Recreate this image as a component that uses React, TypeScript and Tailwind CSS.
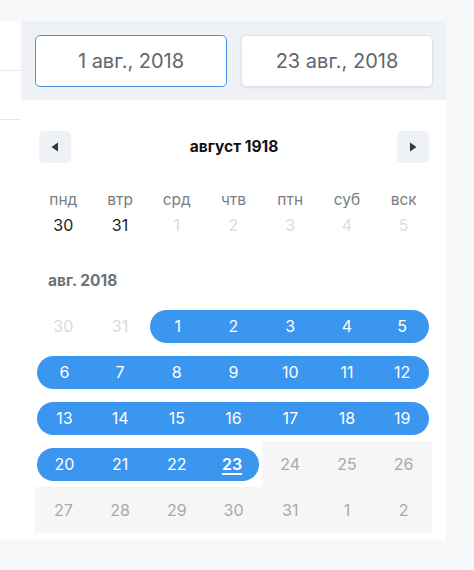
import React from 'react';

const weekDays = ['пнд', 'втр', 'срд', 'чтв', 'птн', 'суб', 'вск'];

type Day = { n: number; kind: 'faint' | 'sel' | 'muted' | 'plain' };

const rows: Day[][] = [
  [
    { n: 30, kind: 'faint' },
    { n: 31, kind: 'faint' },
    { n: 1, kind: 'sel' },
    { n: 2, kind: 'sel' },
    { n: 3, kind: 'sel' },
    { n: 4, kind: 'sel' },
    { n: 5, kind: 'sel' },
  ],
  [6, 7, 8, 9, 10, 11, 12].map((n) => ({ n, kind: 'sel' as const })),
  [13, 14, 15, 16, 17, 18, 19].map((n) => ({ n, kind: 'sel' as const })),
  [
    { n: 20, kind: 'sel' },
    { n: 21, kind: 'sel' },
    { n: 22, kind: 'sel' },
    { n: 23, kind: 'sel' },
    { n: 24, kind: 'muted' },
    { n: 25, kind: 'muted' },
    { n: 26, kind: 'muted' },
  ],
  [27, 28, 29, 30, 31, 1, 2].map((n) => ({ n, kind: 'muted' as const })),
];

const Arrow = ({ dir }: { dir: 'left' | 'right' }) => (
  <svg width="8" height="10" viewBox="0 0 8 10">
    {dir === 'left' ? (
      <path d="M7 0.5 L0.5 5 L7 9.5 Z" fill="#2d3748" />
    ) : (
      <path d="M1 0.5 L7.5 5 L1 9.5 Z" fill="#2d3748" />
    )}
  </svg>
);

const DayCell = ({ day, prev, next }: { day: Day; prev?: Day; next?: Day }) => {
  if (day.kind === 'sel') {
    const start = !prev || prev.kind !== 'sel';
    const end = !next || next.kind !== 'sel';
    return (
      <div className="h-[46px] flex items-center">
        <div
          className={`h-[33px] flex-1 bg-[#3b96ef] flex items-center justify-center text-white text-[16px] ${
            start ? 'rounded-l-full ml-[2px]' : ''
          } ${end ? 'rounded-r-full mr-[3px]' : ''}`}
        >
          {day.n === 23 ? (
            <span className="font-semibold border-b-2 border-white leading-[18px] pt-[2px]">23</span>
          ) : (
            day.n
          )}
        </div>
      </div>
    );
  }
  return (
    <div
      className={`h-[46px] flex items-center justify-center text-[16px] ${
        day.kind === 'muted' ? 'bg-[#f6f6f6] text-[#a9a9a9]' : 'text-[#d9d9d9]'
      }`}
    >
      {day.n}
    </div>
  );
};

export default function App() {
  return (
    <div
      className="w-[474px] h-[570px] bg-[#f7f8f9] flex flex-col overflow-hidden"
      style={{ fontFamily: 'Inter, "Noto Sans", sans-serif' }}
    >
      <div className="h-[21px] shrink-0" />
      <div className="flex">
        <div className="w-[21px] h-[519px] bg-white flex flex-col">
          <div className="h-[50px] border-b border-[#e8e8e8]" />
          <div className="h-[49px] border-b border-[#e8e8e8]" />
        </div>

        <div className="w-[425px] bg-white flex flex-col">
          <div className="bg-[#eef1f5] flex gap-[14px] pl-[14px] pr-[13px] pt-[14px] pb-[13px]">
            <div className="w-[192px] h-[52px] rounded-[5px] border-[1.5px] border-[#4a90e2] bg-white flex items-center justify-center text-[20px] text-[#62666b]">
              1 авг., 2018
            </div>
            <div className="w-[192px] h-[52px] rounded-[5px] border border-[#e1e3e6] bg-white shadow-[0_1px_2px_rgba(0,0,0,0.08)] flex items-center justify-center text-[20px] text-[#62666b]">
              23 авг., 2018
            </div>
          </div>

          <div className="px-[14px] pt-[31px] pb-[7px]">
            <div className="flex items-center justify-between pl-[4px] pr-[3px]">
              <button className="w-[32px] h-[32px] rounded-[5px] bg-[#eef1f5] flex items-center justify-center">
                <Arrow dir="left" />
              </button>
              <div className="text-[15.5px] font-bold text-[#111]">август 1918</div>
              <button className="w-[32px] h-[32px] rounded-[5px] bg-[#eef1f5] flex items-center justify-center">
                <Arrow dir="right" />
              </button>
            </div>

            <div className="grid grid-cols-7 mt-[25px] h-[20px] items-center text-center text-[15.5px] text-[#7a7d82]">
              {weekDays.map((d) => (
                <div key={d}>{d}</div>
              ))}
            </div>
            <div className="grid grid-cols-7 mt-[5px] h-[20px] items-center text-center text-[16px]">
              {[30, 31, 1, 2, 3, 4, 5].map((n, i) => (
                <div key={i} className={i < 2 ? 'text-[#222]' : 'text-[#dcdcdc]'}>
                  {n}
                </div>
              ))}
            </div>

            <div className="mt-[38px] h-[20px] flex items-center pl-[13px] text-[15.5px] font-bold text-[#6e7278]">
              авг. 2018
            </div>

            <div className="mt-[12px] flex flex-col">
              {rows.map((row, r) => (
                <div key={r} className="grid grid-cols-7">
                  {row.map((day, i) => (
                    <DayCell key={i} day={day} prev={row[i - 1]} next={row[i + 1]} />
                  ))}
                </div>
              ))}
            </div>
          </div>
        </div>

        <div className="flex-1 bg-[#f8f8f8]" />
      </div>
    </div>
  );
}
